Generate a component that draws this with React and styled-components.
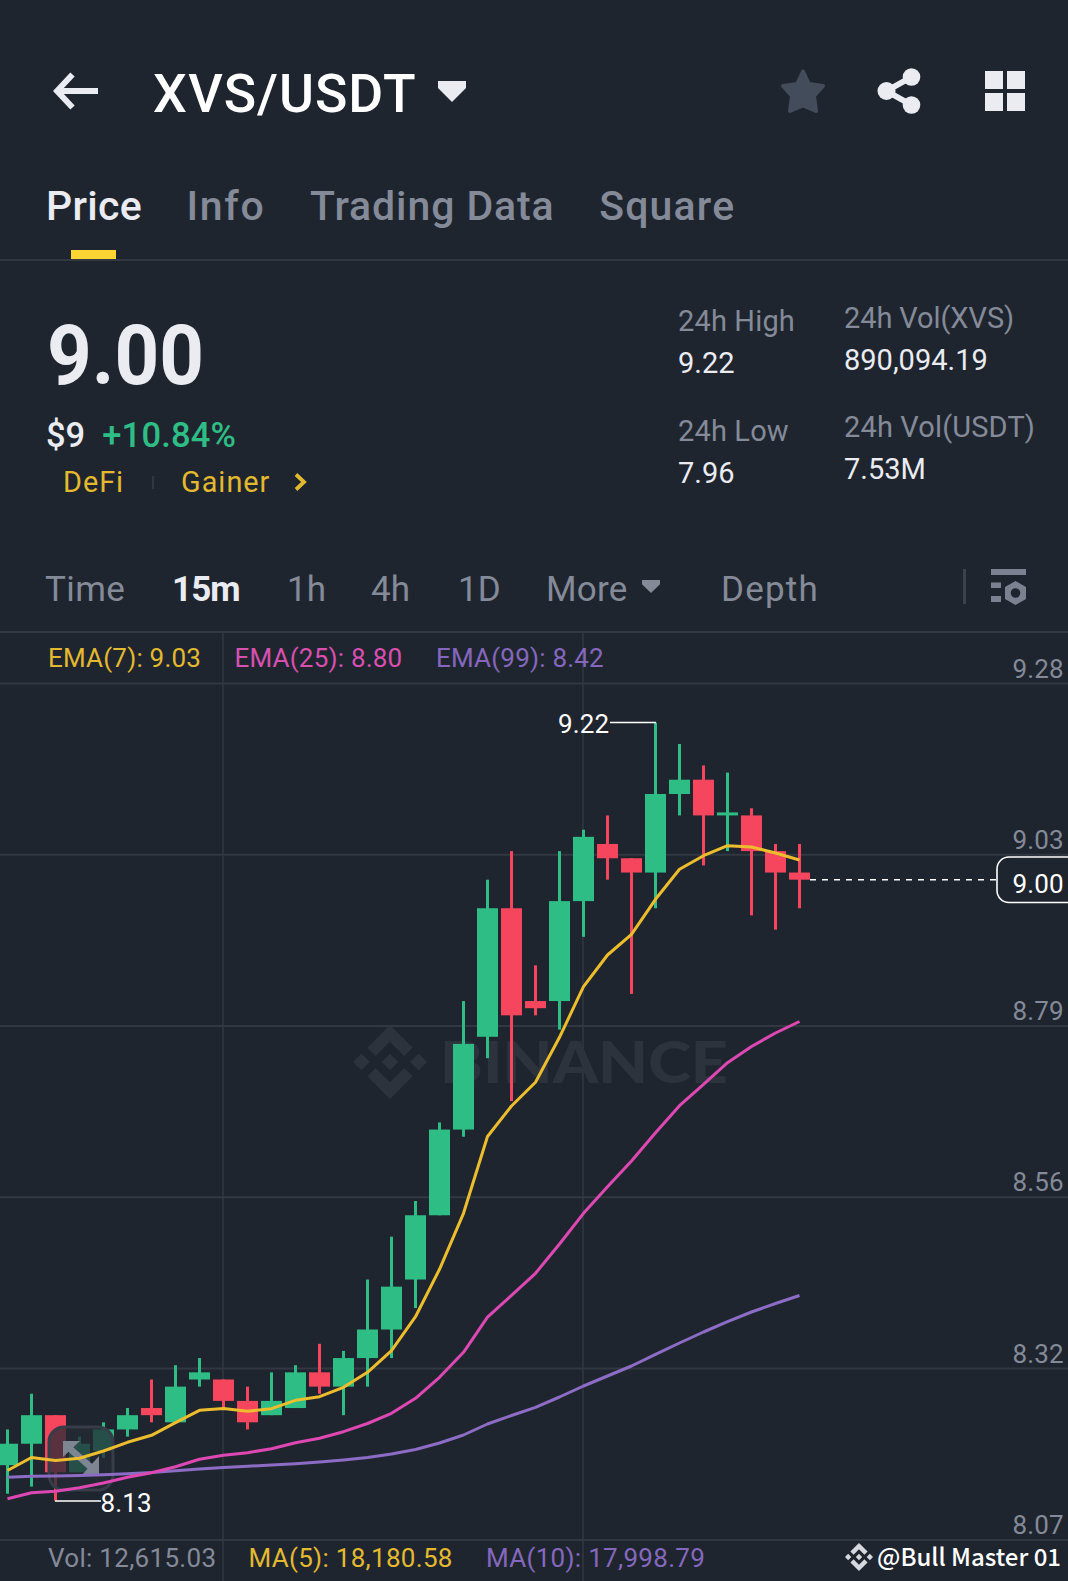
import React from 'react'
import styled, { createGlobalStyle } from 'styled-components'
import { SiBinance } from 'react-icons/si'

const colors = {
    bg: '#1f252f',
    line: '#323842',
    text: '#eaecf2',
    muted: '#848a98',
    green: '#2ebd85',
    red: '#f6465d',
    yellow: '#e3b92f',
    pink: '#d94fb0',
    purple: '#8568bd'
}

const GlobalStyle = createGlobalStyle`
    body {
        margin: 0;
        background-color: ${colors.bg};
        font-family: Roboto, "Liberation Sans", sans-serif;
    }
`

const Screen = styled.div`
    display: flex;
    flex-direction: column;
    width: 1068px;
    height: 1581px;
    overflow: hidden;
    color: ${colors.text};
    background-color: ${colors.bg};
    white-space: nowrap;
`

const Header = styled.header`
    display: flex;
    align-items: center;
    height: 182px;
    padding: 0 43px 0 53px;
`

const Pair = styled.h1`
    margin: 5px 21px 0 54px;
    font-size: 53.5px;
    font-weight: 500;
    line-height: 60px;
    letter-spacing: 1px;
    color: white;
`

const HeaderActions = styled.div`
    display: flex;
    align-items: center;
    margin-left: auto;
`

const ShareSlot = styled.div`
    display: flex;
    margin: 0 64px 0 51px;
`

const Tabs = styled.nav`
    display: flex;
    height: 77px;
    padding-left: 46px;
    border-bottom: 2px solid ${colors.line};
`

const Tab = styled.div`
    display: flex;
    flex-direction: column;
    align-items: center;
    justify-content: space-between;
    margin-right: 44.5px;
    padding-top: 4px;
    font-size: 41px;
    font-weight: 500;
    line-height: 40px;
    letter-spacing: ${props => props.$spacing || 0}px;
    color: ${props => props.$active ? colors.text : colors.muted};
    &::after {
        content: "";
        width: 45px;
        height: 9px;
        background-color: ${props => props.$active ? '#fcd535' : 'transparent'};
    }
`

const Summary = styled.section`
    display: flex;
    justify-content: space-between;
    height: 285px;
    padding: 0 35px 0 46px;
`

const PriceBlock = styled.div`
    padding-top: 50px;
`

const LastPrice = styled.div`
    font-size: 83px;
    font-weight: 700;
    line-height: 90px;
    transform: scaleX(0.94);
    transform-origin: left;
    margin-left: 1px;
`

const ChangeRow = styled.div`
    display: flex;
    gap: 17px;
    margin-top: 13px;
    font-size: 34.5px;
    font-weight: 500;
    line-height: 42px;
`

const Change = styled.span`
    letter-spacing: 0.2px;
    color: ${colors.green};
`

const Tags = styled.div`
    display: flex;
    align-items: center;
    margin-top: 4px;
    padding-left: 17px;
    font-size: 28.8px;
    line-height: 44px;
    letter-spacing: 1px;
    color: ${colors.yellow};
    svg {
        margin-left: 24px;
    }
`

const TagDivider = styled.i`
    width: 2px;
    height: 13px;
    margin: 0 27.5px;
    background-color: ${colors.line};
`

const Stats = styled.div`
    display: flex;
    gap: 50px;
    margin-right: -1px;
`

const StatColumn = styled.div`
    width: ${props => props.$width}px;
    padding-top: ${props => props.$top}px;
`

const Stat = styled.div`
    height: ${props => props.$height}px;
    font-size: 29px;
    line-height: 42.4px;
`

const StatLabel = styled.div`
    letter-spacing: ${props => props.$spacing ?? 0.15}px;
    color: ${colors.muted};
`

const Intervals = styled.nav`
    display: flex;
    align-items: center;
    height: 85px;
    padding: 0 42px 0 45px;
    font-size: 35px;
    color: ${colors.muted};
`

const Interval = styled.span`
    display: flex;
    align-items: center;
    flex: none;
    gap: 15px;
    width: ${props => props.$width}px;
    padding-top: 2px;
    font-weight: ${props => props.$active ? 700 : 400};
    letter-spacing: ${props => props.$spacing || 0}px;
    color: ${props => props.$active ? colors.text : 'inherit'};
    svg {
        margin-bottom: 6px;
    }
`

const ToolDivider = styled.i`
    width: 3px;
    height: 35px;
    margin: 0 25px 5px auto;
    background-color: #3a414d;
`

const ToolSlot = styled.div`
    display: flex;
    padding-bottom: 3px;
`

/* the drawing and both legends share one grid cell */
const Chart = styled.section`
    display: grid;
    grid-template: 950px / 1068px;
    > * {
        grid-area: 1 / 1;
    }
`

const Legend = styled.div`
    display: flex;
    align-self: ${props => props.$bottom ? 'end' : 'start'};
    padding-left: 48px;
    padding-top: ${props => props.$bottom ? 0 : 11}px;
    padding-bottom: ${props => props.$bottom ? 7 : 0}px;
    font-size: 26px;
    line-height: 32px;
    letter-spacing: ${props => props.$bottom ? 0.3 : 0.2}px;
`

const LegendItem = styled.span`
    width: ${props => props.$width}px;
    color: ${props => props.$color};
`

const Signature = styled.div`
    display: flex;
    align-items: center;
    align-self: end;
    justify-self: end;
    gap: 4px;
    height: 32px;
    padding: 0 7px 8px 0;
    font-family: "Noto Sans CJK SC", sans-serif;
    font-size: 24px;
    font-weight: 500;
    color: white;
    svg {
        color: #d5d8dc;
    }
`

const Author = styled.span`
    padding-bottom: 4px;
`

const AxisText = styled.text`
    font-size: 26px;
    fill: ${props => props.$bright ? 'white' : colors.muted};
`

const Brand = styled.text`
    font-family: Lato, sans-serif;
    font-size: 57px;
    font-weight: 900;
`

// open, close, high, low
const candles = [
    [8.18, 8.21, 8.23, 8.14],
    [8.21, 8.25, 8.28, 8.15],
    [8.25, 8.17, 8.25, 8.13],
    [8.17, 8.21, 8.22, 8.17],
    [8.20, 8.23, 8.24, 8.19],
    [8.23, 8.25, 8.26, 8.22],
    [8.26, 8.25, 8.30, 8.24],
    [8.24, 8.29, 8.32, 8.24],
    [8.30, 8.31, 8.33, 8.29],
    [8.30, 8.27, 8.30, 8.26],
    [8.27, 8.24, 8.29, 8.23],
    [8.25, 8.27, 8.31, 8.25],
    [8.26, 8.31, 8.32, 8.26],
    [8.31, 8.29, 8.35, 8.28],
    [8.29, 8.33, 8.34, 8.25],
    [8.33, 8.37, 8.44, 8.29],
    [8.37, 8.43, 8.50, 8.33],
    [8.44, 8.53, 8.55, 8.40],
    [8.53, 8.65, 8.66, 8.53],
    [8.65, 8.77, 8.83, 8.64],
    [8.78, 8.96, 9.00, 8.75],
    [8.96, 8.81, 9.04, 8.69],
    [8.83, 8.82, 8.88, 8.81],
    [8.83, 8.97, 9.04, 8.79],
    [8.97, 9.06, 9.07, 8.92],
    [9.05, 9.03, 9.09, 9.00],
    [9.03, 9.01, 9.03, 8.84],
    [9.01, 9.12, 9.22, 8.96],
    [9.12, 9.14, 9.19, 9.09],
    [9.14, 9.09, 9.16, 9.02],
    [9.09, 9.09, 9.15, 9.04],
    [9.09, 9.04, 9.10, 8.95],
    [9.04, 9.01, 9.05, 8.93],
    [9.01, 9.00, 9.05, 8.96]
]

// moving averages, already in chart units, one point per candle
const ema7 = [1470.5, 1457.5, 1460.5, 1458.3, 1451, 1442.3, 1435.3, 1422.7, 1410.3, 1408.5, 1411.3, 1408.7, 1400.3, 1396.7, 1387.3, 1372.3, 1350.7, 1316.7, 1269.3, 1213.3, 1136.5, 1106, 1082.3, 1037.3, 986.7, 955, 934.3, 899.3, 869.3, 855.7, 845.7, 847, 853, 860]
const ema25 = [1498.7, 1492.7, 1491.3, 1487.7, 1483, 1477.3, 1472.7, 1466.7, 1459.3, 1455.3, 1452.7, 1448.7, 1442.7, 1438.3, 1431.7, 1423.5, 1413.3, 1398.3, 1377.3, 1352.3, 1317.2, 1295.3, 1273.3, 1244, 1213.3, 1186.7, 1161, 1132.7, 1105.7, 1084.3, 1062.7, 1046.5, 1033, 1021.5]
const ema99 = [1477.3, 1476.3, 1476, 1475.5, 1474.7, 1473.7, 1472.5, 1470.7, 1469, 1467.5, 1466.3, 1465, 1463.7, 1462, 1460, 1457.5, 1454, 1449.5, 1443, 1435, 1424, 1415.5, 1407.3, 1397, 1386, 1376, 1366, 1354.3, 1343, 1332, 1321.7, 1312, 1303.5, 1295.5]

const axis = [
    ['9.28', 683.5],
    ['9.03', 854.7],
    ['8.79', 1026],
    ['8.56', 1197.3],
    ['8.32', 1368.5],
    ['8.07', 1540]
]

const candleX = i => 7.5 + i * 24
const priceY = price => 722.6 + (9.22 - price) * 714
const toPoints = values => values.map((y, i) => `${candleX(i)},${y}`).join(' ')

const Caret = ({ width, height }) => (
    <svg width={width} height={height} viewBox="0 0 28 21" preserveAspectRatio="none" fill="currentColor">
        <path d="M0 0H28V7L14 21L0 7Z" />
    </svg>
)

const BackIcon = () => (
    <svg width="46" height="38" viewBox="0 0 46 38" fill="none" stroke={colors.text} strokeWidth="6">
        <path d="M45 19H5M19.500 2.500L4 19L19.500 35.500" />
    </svg>
)

const StarIcon = () => (
    <svg width="46" height="46" viewBox="0 0 46 46" fill="#434c5a" stroke="#434c5a" strokeWidth="4" strokeLinejoin="round">
        <path d="M23 3.500L28.800 16L43 18L34 28L36 43L23 37.500L10 43L12 28L3 18L17.200 16Z" />
    </svg>
)

const ShareIcon = () => (
    <svg width="44" height="46" viewBox="0 0 44 46" fill={colors.text} stroke={colors.text}>
        <path d="M34.500 9L9.500 23L34.500 37" fill="none" strokeWidth="6" />
        <g stroke="none">
            <circle cx="34.500" cy="9" r="8.800" />
            <circle cx="9.500" cy="23" r="9" />
            <circle cx="34.500" cy="37" r="8.800" />
        </g>
    </svg>
)

const GridIcon = () => (
    <svg width="40" height="40" viewBox="0 0 40 40" fill={colors.text}>
        <path d="M0 0H18V18H0ZM22 0H40V18H22ZM0 22H18V40H0ZM22 22H40V40H22Z" />
    </svg>
)

const ChartSettingsIcon = () => (
    <svg width="35" height="36" viewBox="0 0 35 36" fill="#7b8190">
        <path d="M0 0H35V6H0ZM0 13.500H10V19H0ZM0 27H10V33H0Z" />
        <path fillRule="evenodd" d="M24.500 12L35 18V30L24.500 36L14 30V18ZM24.500 19.200A4.800 4.800 0 1 0 24.500 28.800A4.800 4.800 0 1 0 24.500 19.200Z" />
    </svg>
)

const ChevronIcon = () => (
    <svg width="13" height="18" viewBox="0 0 13 18" fill="none" stroke={colors.yellow} strokeWidth="3.800">
        <path d="M2 1.500L10 9L2 16.500" />
    </svg>
)

const Candle = ({ x, data }) => {
    const [open, close, high, low] = data
    const color = close >= open ? colors.green : colors.red
    const top = priceY(Math.max(open, close))
    const height = Math.abs(priceY(open) - priceY(close))
    return (
        <g fill={color}>
            <rect x={x - 1.5} y={priceY(high)} width="3" height={priceY(low) - priceY(high)} />
            <rect x={x - 10.5} y={height ? top : top - 3} width="21" height={height || 3} />
        </g>
    )
}

const FullscreenButton = () => (
    <g>
        <rect x="49" y="1427" width="64" height="63" rx="15" fill="#252b36" fillOpacity="0.75" stroke="#363d48" strokeWidth="3" />
        <g fill="#7e8593">
            <path d="M63 1441H80L63 1457ZM99 1475H82L99 1456Z" />
            <path d="M68 1447L94 1470" stroke="#7e8593" strokeWidth="6.500" />
        </g>
    </g>
)

const PriceChart = () => (
    <svg width="1068" height="950" viewBox="0 631 1068 950">
        <g stroke={colors.line} strokeWidth="2">
            <path d="M0 632H1068" />
            {axis.map(([label, y]) => <path key={label} d={`M0 ${y}H1068`} />)}
            <path d="M223 632V1581M583 632V1581" strokeWidth="1.500" />
        </g>
        <g fill="#2d333d">
            <SiBinance x="353" y="1025" size="74" color="#2d333d" />
            <Brand x="440" y="1082.500" textLength="288" lengthAdjust="spacingAndGlyphs">BINANCE</Brand>
        </g>
        {candles.map((data, i) => <Candle key={i} x={candleX(i)} data={data} />)}
        <FullscreenButton />
        <g fill="none" strokeWidth="3" strokeLinejoin="round">
            <polyline points={toPoints(ema99)} stroke="#8c6cc4" />
            <polyline points={toPoints(ema25)} stroke="#dd48b2" />
            <polyline points={toPoints(ema7)} stroke="#ecbd2d" />
        </g>
        <g fill="none" stroke="white" strokeWidth="1.600">
            <path d="M610 722.500H656M55 1501H101" />
            <path d="M810 879.700H997" strokeDasharray="6 6" />
            <rect x="997" y="857" width="90" height="45.500" rx="12" fill={colors.bg} />
        </g>
        {axis.map(([label, y]) => (
            <AxisText key={label} x="1012.500" y={y - 6} textLength="51">{label}</AxisText>
        ))}
        <AxisText $bright x="1012.500" y="892.500" textLength="51">9.00</AxisText>
        <AxisText $bright x="558" y="732.700" textLength="51">9.22</AxisText>
        <AxisText $bright x="100.500" y="1512" textLength="51">8.13</AxisText>
    </svg>
)

const App = () => (
    <Screen>
        <GlobalStyle />
        <Header>
            <BackIcon />
            <Pair>XVS/USDT</Pair>
            <Caret width={28} height={21} />
            <HeaderActions>
                <StarIcon />
                <ShareSlot><ShareIcon /></ShareSlot>
                <GridIcon />
            </HeaderActions>
        </Header>
        <Tabs>
            <Tab $active $spacing={0.3}>Price</Tab>
            <Tab $spacing={1.7}>Info</Tab>
            <Tab $spacing={0.9}>Trading Data</Tab>
            <Tab $spacing={1.2}>Square</Tab>
        </Tabs>
        <Summary>
            <PriceBlock>
                <LastPrice>9.00</LastPrice>
                <ChangeRow>
                    <span>$9</span>
                    <Change>+10.84%</Change>
                </ChangeRow>
                <Tags>
                    <span>DeFi</span>
                    <TagDivider />
                    <span>Gainer</span>
                    <ChevronIcon />
                </Tags>
            </PriceBlock>
            <Stats>
                <StatColumn $width={116} $top={39}>
                    <Stat $height={110}>
                        <StatLabel>24h High</StatLabel>
                        9.22
                    </Stat>
                    <Stat $height={110}>
                        <StatLabel>24h Low</StatLabel>
                        7.96
                    </Stat>
                </StatColumn>
                <StatColumn $width={190} $top={36}>
                    <Stat $height={109}>
                        <StatLabel $spacing={-0.1}>24h Vol(XVS)</StatLabel>
                        890,094.19
                    </Stat>
                    <Stat $height={109}>
                        <StatLabel>24h Vol(USDT)</StatLabel>
                        7.53M
                    </Stat>
                </StatColumn>
            </Stats>
        </Summary>
        <Intervals>
            <Interval $width={127} $spacing={0.4}>Time</Interval>
            <Interval $width={115} $spacing={-0.9} $active>15m</Interval>
            <Interval $width={84}>1h</Interval>
            <Interval $width={87}>4h</Interval>
            <Interval $width={88}>1D</Interval>
            <Interval $width={175} $spacing={0.2}>More <Caret width={18} height={13} /></Interval>
            <Interval $width={100} $spacing={1.2}>Depth</Interval>
            <ToolDivider />
            <ToolSlot><ChartSettingsIcon /></ToolSlot>
        </Intervals>
        <Chart>
            <PriceChart />
            <Legend>
                <LegendItem $width={186.5} $color={colors.yellow}>EMA(7): 9.03</LegendItem>
                <LegendItem $width={201.5} $color={colors.pink}>EMA(25): 8.80</LegendItem>
                <LegendItem $color={colors.purple}>EMA(99): 8.42</LegendItem>
            </Legend>
            <Legend $bottom>
                <LegendItem $width={200.5} $color={colors.muted}>Vol: 12,615.03</LegendItem>
                <LegendItem $width={237.5} $color={colors.yellow}>MA(5): 18,180.58</LegendItem>
                <LegendItem $color={colors.purple}>MA(10): 17,998.79</LegendItem>
            </Legend>
            <Signature>
                <SiBinance size={28} />
                <Author>@Bull Master 01</Author>
            </Signature>
        </Chart>
    </Screen>
)

export default App
